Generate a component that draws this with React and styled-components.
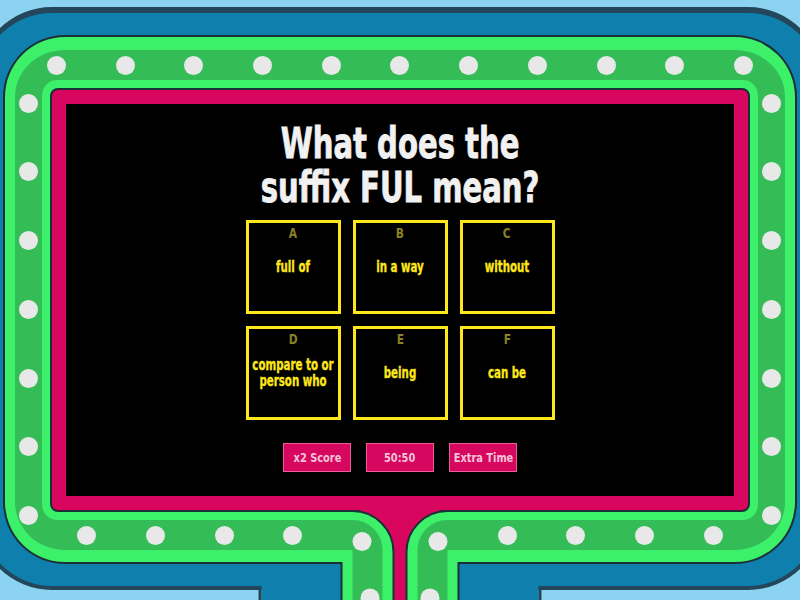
import React from 'react';
import styled, { createGlobalStyle } from 'styled-components';

const colors = {
  sky: '#8cd3f1',
  outline: '#23465a',
  teal: '#0f7fad',
  lime: '#3cf06a',
  green: '#34bd56',
  pink: '#d8065f',
  ink: '#1c2f36',
  bulb: '#e8e8e8',
  yellow: '#ffe81a',
  olive: '#8a8122',
};

// the quiz face is a heavy, narrow type; the installed condensed face is squeezed a little further
const font = "'DejaVu Sans Condensed', 'DejaVu Sans', sans-serif";

const answers = [
  { letter: 'A', text: 'full of' },
  { letter: 'B', text: 'in a way' },
  { letter: 'C', text: 'without' },
  { letter: 'D', text: 'compare to or person who' },
  { letter: 'E', text: 'being' },
  { letter: 'F', text: 'can be' },
];

const powerUps = ['x2 Score', '50:50', 'Extra Time'];

const Bulbs = ({ count }) => Array.from({ length: count }, (_, i) => <Bulb key={i} />);

const Neck = () => (
  <NeckArt viewBox="230 497 340 110" aria-hidden="true">
    <rect x="261.5" y="585" width="277" height="30" fill={colors.teal} />
    <path d="M260 588 V615 M540 588 V615" stroke={colors.outline} strokeWidth="3" fill="none" />
    <rect x="360" y="497" width="80" height="115" fill={colors.pink} />
    <g fill="none">
      <path d="M330 537 H352.5 A15 15 0 0 1 367.5 552 V620" stroke={colors.ink} strokeWidth="54" />
      <path d="M470 537 H447.5 A15 15 0 0 0 432.5 552 V620" stroke={colors.ink} strokeWidth="54" />
      <path d="M330 537 H352.5 A15 15 0 0 1 367.5 552 V620" stroke={colors.lime} strokeWidth="50" />
      <path d="M470 537 H447.5 A15 15 0 0 0 432.5 552 V620" stroke={colors.lime} strokeWidth="50" />
      <path d="M330 535 H352.5 A15 15 0 0 1 367.5 550 V620" stroke={colors.green} strokeWidth="30" />
      <path d="M470 535 H447.5 A15 15 0 0 0 432.5 550 V620" stroke={colors.green} strokeWidth="30" />
    </g>
    <g fill={colors.bulb}>
      <circle cx="362" cy="541.5" r="9.5" />
      <circle cx="438" cy="541.5" r="9.5" />
      <circle cx="370" cy="598" r="9.5" />
      <circle cx="430" cy="598" r="9.5" />
    </g>
  </NeckArt>
);

const App = () => (
  <>
    <GlobalStyle />
    <Stage>
      <Cabinet>
        <Band>
          <TopLights><Bulbs count={11} /></TopLights>
          <SideLights $col={1}><Bulbs count={7} /></SideLights>
          <Screen>
            <Question>What does the<br />suffix FUL mean?</Question>
            <AnswerGrid>
              {answers.map((a) => (
                <AnswerBox key={a.letter}>
                  <Letter>{a.letter}</Letter>
                  <AnswerText>{a.text}</AnswerText>
                </AnswerBox>
              ))}
            </AnswerGrid>
            <PowerUps>
              {powerUps.map((p) => (
                <PowerButton key={p}><ButtonLabel>{p}</ButtonLabel></PowerButton>
              ))}
            </PowerUps>
          </Screen>
          <SideLights $col={3}><Bulbs count={7} /></SideLights>
          <BottomLights>
            <LightGroup><Bulbs count={4} /></LightGroup>
            <LightGroup><Bulbs count={4} /></LightGroup>
          </BottomLights>
        </Band>
      </Cabinet>
      <Neck />
    </Stage>
  </>
);

const GlobalStyle = createGlobalStyle`
  html, body {
    margin: 0;
    padding: 0;
    background: ${colors.sky};
  }
  * {
    box-sizing: border-box;
  }
`;

const Stage = styled.div`
  position: relative;
  width: 800px;
  height: 600px;
  overflow: hidden;
  padding-top: 7px;
  background: ${colors.sky};
  font-family: ${font};
`;

const Cabinet = styled.div`
  width: 846px;
  height: 583px;
  margin-left: -23px;
  padding: 24px 24px 0;
  border-style: solid;
  border-color: ${colors.outline};
  border-width: 6px 4px 4px;
  border-radius: 75px;
  background: ${colors.teal};
`;

const Band = styled.div`
  display: grid;
  grid-template-columns: 27px 1fr 27px;
  grid-template-rows: 30px 440px 30px;
  border-style: solid;
  border-color: ${colors.lime};
  border-width: 13px 10px 12px;
  border-radius: 60px;
  background: ${colors.green};
  box-shadow: 0 0 0 2px ${colors.ink};
`;

const Bulb = styled.span`
  display: block;
  flex-shrink: 0;
  width: 19px;
  height: 19px;
  border-radius: 50%;
  background: ${colors.bulb};
`;

const TopLights = styled.div`
  grid-column: 1 / -1;
  display: flex;
  align-items: center;
  justify-content: space-between;
  padding: 0 32px;
`;

const SideLights = styled.div`
  grid-column: ${(p) => p.$col};
  grid-row: 2;
  display: flex;
  flex-direction: column;
  align-items: center;
  gap: 49.8px;
  padding-top: 13.5px;
`;

const BottomLights = styled.div`
  grid-column: 1 / -1;
  display: flex;
  align-items: center;
  justify-content: space-between;
  padding: 0 62px;
`;

const LightGroup = styled.div`
  display: flex;
  gap: 49.8px;
`;

const Screen = styled.main`
  grid-column: 2;
  grid-row: 2;
  height: 420px;
  margin: 10px;
  display: flex;
  flex-direction: column;
  align-items: center;
  padding-top: 18px;
  border: 14px solid ${colors.pink};
  border-radius: 6px;
  background: #000;
  box-shadow: 0 0 0 2px ${colors.ink}, 0 0 0 10px ${colors.lime};
`;

const Question = styled.h1`
  margin: 0;
  font-size: 42px;
  line-height: 44px;
  font-weight: 700;
  color: #f1f1f1;
  -webkit-text-stroke: 0.8px #f1f1f1;
  text-align: center;
  white-space: nowrap;
  transform: scaleX(0.77);
`;

const AnswerGrid = styled.div`
  display: grid;
  grid-template-columns: repeat(3, 95px);
  grid-auto-rows: 94px;
  gap: 12px;
  margin-top: 10px;
`;

const AnswerBox = styled.div`
  display: grid;
  grid-template-areas: 'cell';
  border: 3px solid ${colors.yellow};
`;

const Letter = styled.span`
  grid-area: cell;
  align-self: start;
  justify-self: center;
  margin-top: 2px;
  font-size: 14px;
  line-height: 16px;
  font-weight: 700;
  color: ${colors.olive};
  transform: scaleX(0.85);
`;

const AnswerText = styled.span`
  grid-area: cell;
  align-self: center;
  margin: 0 -11.5px;
  font-size: 15px;
  line-height: 16px;
  font-weight: 700;
  color: ${colors.yellow};
  -webkit-text-stroke: 0.3px ${colors.yellow};
  text-align: center;
  transform: scaleX(0.76);
`;

const PowerUps = styled.div`
  display: flex;
  gap: 15px;
  margin-top: 23px;
`;

const PowerButton = styled.button`
  display: inline-flex;
  align-items: center;
  justify-content: center;
  width: 68px;
  height: 29px;
  padding: 0;
  border: 1px solid #ec5d98;
  background: #d5075f;
  color: #f6c4da;
  font-family: ${font};
  font-size: 13px;
  font-weight: 700;
  white-space: nowrap;
  cursor: pointer;
`;

const ButtonLabel = styled.span`
  display: inline-block;
  transform: scaleX(0.84);
`;

const NeckArt = styled.svg`
  position: absolute;
  left: 230px;
  top: 497px;
  width: 340px;
  height: 110px;
`;

export default App;
